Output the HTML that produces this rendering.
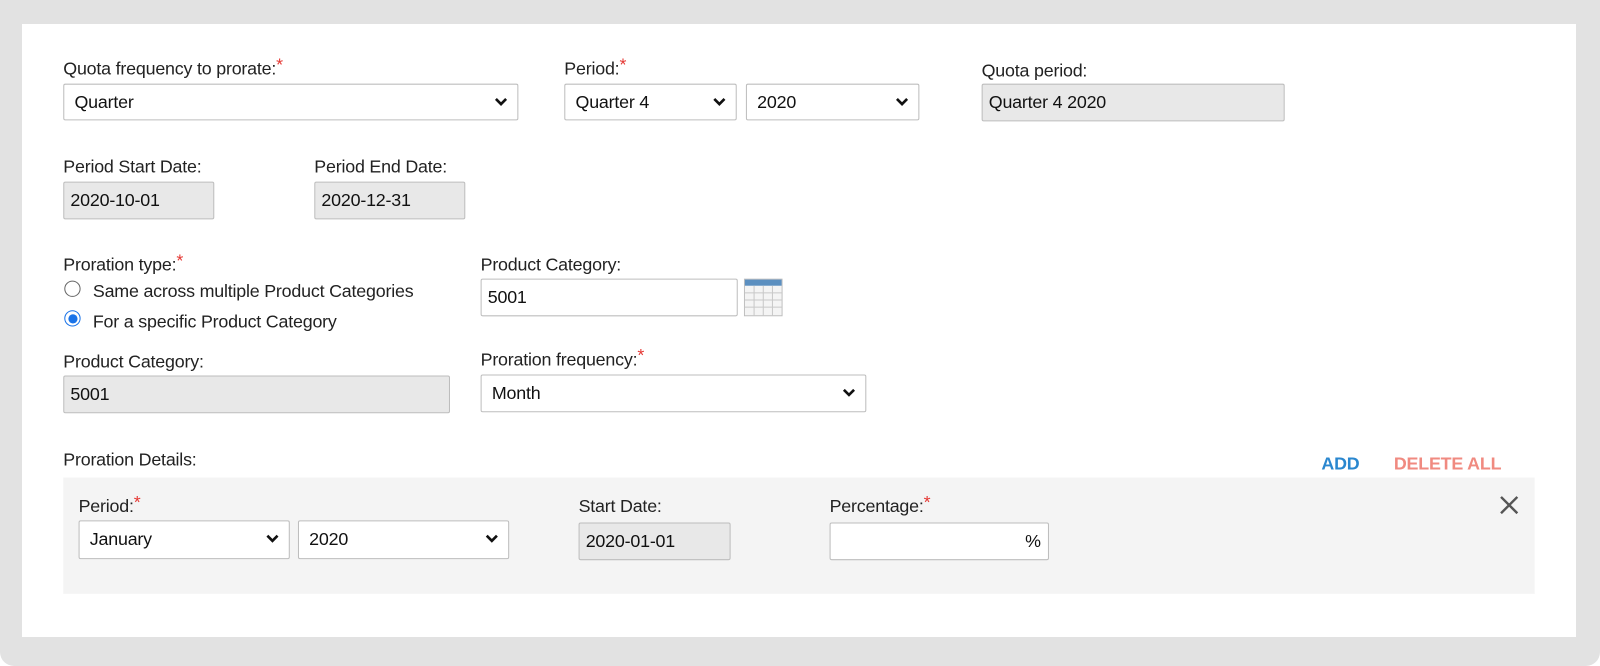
<!DOCTYPE html>
<html><head><meta charset="utf-8"><style>
*{box-sizing:border-box;margin:0;padding:0}
body{width:1600px;height:666px;background:#fff;font-family:"Liberation Sans",Arial,sans-serif;font-size:17.5px;color:#222;position:relative;overflow:hidden}
.outer{position:absolute;left:0;top:0;width:1600px;height:666px;background:#e2e2e2;border-radius:0 0 14px 14px}
.inner{position:absolute;left:22px;top:24px;width:1554px;height:613px;background:#fff}
.w{position:absolute;left:0;top:0;width:1568px;height:653px;transform:scale(1.0204);transform-origin:0 0}
.l{position:absolute;font-size:17.5px;color:#222;line-height:18px;white-space:nowrap;letter-spacing:-0.2px}
.l b{color:#e53935;font-weight:normal;position:relative;top:-4px}
.f{position:absolute;border:1px solid #bdbdbd;border-radius:2px;background:#fff;padding-left:10px;line-height:34px;font-size:17.5px;color:#111;white-space:nowrap;letter-spacing:-0.2px}
.g{background:#e8e8e8;padding-left:6px}
.s svg{position:absolute;right:9px;top:12px}
.r{position:absolute;width:16px;height:16px;border-radius:50%;border:1px solid #666;background:#fff}
</style></head><body>
<div class="outer"></div><div class="inner"></div>
<div class="w">
<div class="l" style="left:62px;top:58px">Quota frequency to prorate:<b>*</b></div>
<div class="f s" style="left:62px;top:82px;width:446px;height:36px">Quarter<svg width="14" height="10" viewBox="0 0 14 10"><path d="M2 2l5 5 5-5" stroke="#111" stroke-width="2.6" fill="none"/></svg></div>

<div class="l" style="left:553px;top:58px">Period:<b>*</b></div>
<div class="f s" style="left:553px;top:82px;width:169px;height:36px">Quarter 4<svg width="14" height="10" viewBox="0 0 14 10"><path d="M2 2l5 5 5-5" stroke="#111" stroke-width="2.6" fill="none"/></svg></div>
<div class="f s" style="left:731px;top:82px;width:170px;height:36px">2020<svg width="14" height="10" viewBox="0 0 14 10"><path d="M2 2l5 5 5-5" stroke="#111" stroke-width="2.6" fill="none"/></svg></div>

<div class="l" style="left:962px;top:60px">Quota period:</div>
<div class="f g" style="left:962px;top:82px;width:297px;height:37px">Quarter 4 2020</div>

<div class="l" style="left:62px;top:154px">Period Start Date:</div>
<div class="f g" style="left:62px;top:178px;width:148px;height:37px">2020-10-01</div>
<div class="l" style="left:308px;top:154px">Period End Date:</div>
<div class="f g" style="left:308px;top:178px;width:148px;height:37px">2020-12-31</div>

<div class="l" style="left:62px;top:250px">Proration type:<b>*</b></div>
<div class="r" style="left:63px;top:275px"></div>
<div class="l" style="left:91px;top:276px">Same across multiple Product Categories</div>
<div class="r" style="left:63px;top:304px;border:1px solid #1a73e8"><div style="position:absolute;left:2.5px;top:2.5px;width:9px;height:9px;border-radius:50%;background:#1a73e8"></div></div>
<div class="l" style="left:91px;top:306px">For a specific Product Category</div>

<div class="l" style="left:471px;top:250px">Product Category:</div>
<div class="f" style="left:471px;top:273px;width:252px;height:37px;padding-left:6px">5001</div>
<svg style="position:absolute;left:729px;top:273px" width="38" height="37" viewBox="0 0 38 37"><rect x="0.5" y="0.5" width="37" height="36" fill="#f4f4f4" stroke="#bbb"/><rect x="1" y="1" width="36" height="6" fill="#5b8fc0"/><g stroke="#c8c8c8" stroke-width="1"><line x1="1" y1="14" x2="37" y2="14"/><line x1="1" y1="21" x2="37" y2="21"/><line x1="1" y1="28" x2="37" y2="28"/><line x1="10" y1="7" x2="10" y2="36"/><line x1="19" y1="7" x2="19" y2="36"/><line x1="28" y1="7" x2="28" y2="36"/></g></svg>

<div class="l" style="left:62px;top:345px">Product Category:</div>
<div class="f g" style="left:62px;top:368px;width:379px;height:37px">5001</div>

<div class="l" style="left:471px;top:343px">Proration frequency:<b>*</b></div>
<div class="f s" style="left:471px;top:367px;width:378px;height:37px">Month<svg width="14" height="10" viewBox="0 0 14 10"><path d="M2 2l5 5 5-5" stroke="#111" stroke-width="2.6" fill="none"/></svg></div>

<div class="l" style="left:62px;top:441px">Proration Details:</div>
<div class="l" style="left:1295px;top:445px;color:#2a87cf;font-weight:bold">ADD</div>
<div class="l" style="left:1366px;top:445px;color:#f08a80;font-weight:bold">DELETE ALL</div>

<div style="position:absolute;left:62px;top:468px;width:1442px;height:114px;background:#f4f4f4"></div>
<svg style="position:absolute;left:1469px;top:485px" width="20" height="20" viewBox="0 0 20 20"><path d="M2 2L18 18M18 2L2 18" stroke="#555" stroke-width="2.4"/></svg>

<div class="l" style="left:77px;top:487px">Period:<b>*</b></div>
<div class="f s" style="left:77px;top:510px;width:207px;height:38px">January<svg width="14" height="10" viewBox="0 0 14 10"><path d="M2 2l5 5 5-5" stroke="#111" stroke-width="2.6" fill="none"/></svg></div>
<div class="f s" style="left:292px;top:510px;width:207px;height:38px">2020<svg width="14" height="10" viewBox="0 0 14 10"><path d="M2 2l5 5 5-5" stroke="#111" stroke-width="2.6" fill="none"/></svg></div>

<div class="l" style="left:567px;top:487px">Start Date:</div>
<div class="f g" style="left:567px;top:512px;width:149px;height:37px">2020-01-01</div>

<div class="l" style="left:813px;top:487px">Percentage:<b>*</b></div>
<div class="f" style="left:813px;top:512px;width:215px;height:37px"><span style="position:absolute;right:7px">%</span></div>
</div>
</body></html>
